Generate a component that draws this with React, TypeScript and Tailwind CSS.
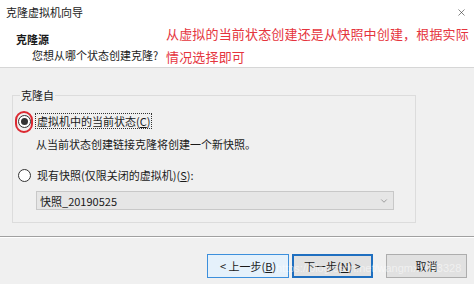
import { ChevronDown, X } from "lucide-react";

const font = { fontFamily: '"Microsoft YaHei", "Noto Sans CJK SC", sans-serif' };

function Radio({ checked }: { checked?: boolean }) {
  return (
    <span className="flex h-[13px] w-[13px] shrink-0 items-center justify-center rounded-full border border-[#333] bg-white">
      {checked && <span className="h-[7px] w-[7px] rounded-full bg-[#333]" />}
    </span>
  );
}

export default function App() {
  return (
    <div
      className="relative h-[284px] w-[474px] overflow-hidden bg-[#f0f0f0] text-[11px] text-[#1a1a1a]"
      style={font}
    >
      {/* 상단 흰색 헤더 */}
      <div className="h-[68px] border-b border-[#d6d6d6] bg-white">
        <div className="flex h-[24px] items-center justify-between pl-[6px] pr-[7px]">
          <span className="leading-[14px]">克隆虚拟机向导</span>
          <X size={11} strokeWidth={1.3} className="text-[#333]" />
        </div>
        <p className="mt-[8px] pl-[16px] font-bold leading-[14px]">克隆源</p>
        <p className="mt-[2px] pl-[32px] leading-[14px]">您想从哪个状态创建克隆?</p>
      </div>

      {/* 그룹 박스 */}
      <div className="h-[169px] border-b border-[#a0a0a0] pl-[12px] pt-[19px]">
        <fieldset className="h-[136px] w-[404px] border border-[#dcdcdc] px-[4px]">
          <legend className="ml-[3px] px-px leading-[16px]">克隆自</legend>
          <div className="mt-[8px] flex h-[20px] items-center gap-[4px] pl-[1px]">
            <Radio checked />
            <span className="border border-dotted border-[#333] px-px leading-[14px]">
              虚拟机中的当前状态(<span className="underline">C</span>)
            </span>
          </div>
          <p className="mt-[3px] pl-[19px] leading-[20px]">从当前状态创建链接克隆将创建一个新快照。</p>
          <div className="mt-[11px] flex h-[20px] items-center gap-[4px] pl-[1px]">
            <Radio />
            <span className="pl-[2px] leading-[14px]">
              现有快照(仅限关闭的虚拟机)(<span className="underline">S</span>):
            </span>
          </div>
          <div className="ml-[19px] mt-[6px] flex h-[19px] w-[358px] items-center justify-between border border-[#c8c8c8] bg-[#e6e6e6] pl-[3px] pr-[4px]">
            <span className="leading-[14px]">快照_20190525</span>
            <ChevronDown size={10} strokeWidth={1.2} className="text-[#555]" />
          </div>
        </fieldset>
      </div>

      {/* 하단 버튼 */}
      <div className="flex h-[46px] justify-end border-t border-white pr-[7px] pt-[16px]">
        <div className="flex h-[24px] gap-[3px]">
          <button className="w-[82px] border border-[#3c8fdc] bg-[#e5f1fb] leading-[14px]">
            &lt; 上一步(<span className="underline">B</span>)
          </button>
          <button className="w-[81px] border-2 border-[#1f6fc0] bg-[#e1e1e1] leading-[14px]">
            下一步(<span className="underline">N</span>) &gt;
          </button>
        </div>
        <button className="ml-[13px] h-[24px] w-[81px] border border-[#adadad] bg-[#e1e1e1] leading-[14px]">
          取消
        </button>
      </div>

      {/* 빨간 주석 */}
      <div className="absolute left-[166px] top-[22px] text-[13px] leading-[23px] tracking-[0.17px] text-[#e5343d]">
        <p>从虚拟的当前状态创建还是从快照中创建，根据实际</p>
        <p>情况选择即可</p>
      </div>
      <div className="absolute left-[15px] top-[111px] h-[22px] w-[18px] rounded-full border-2 border-[#dc2a32]" />

      {/* 워터마크 */}
      <span
        className="pointer-events-none absolute left-[276px] top-[261px] whitespace-nowrap text-[11px] leading-[14px] text-white/50"
        style={{ fontFamily: '"Liberation Sans", sans-serif' }}
      >
        https://blog.csdn.net/wangmx1993328
      </span>
    </div>
  );
}
